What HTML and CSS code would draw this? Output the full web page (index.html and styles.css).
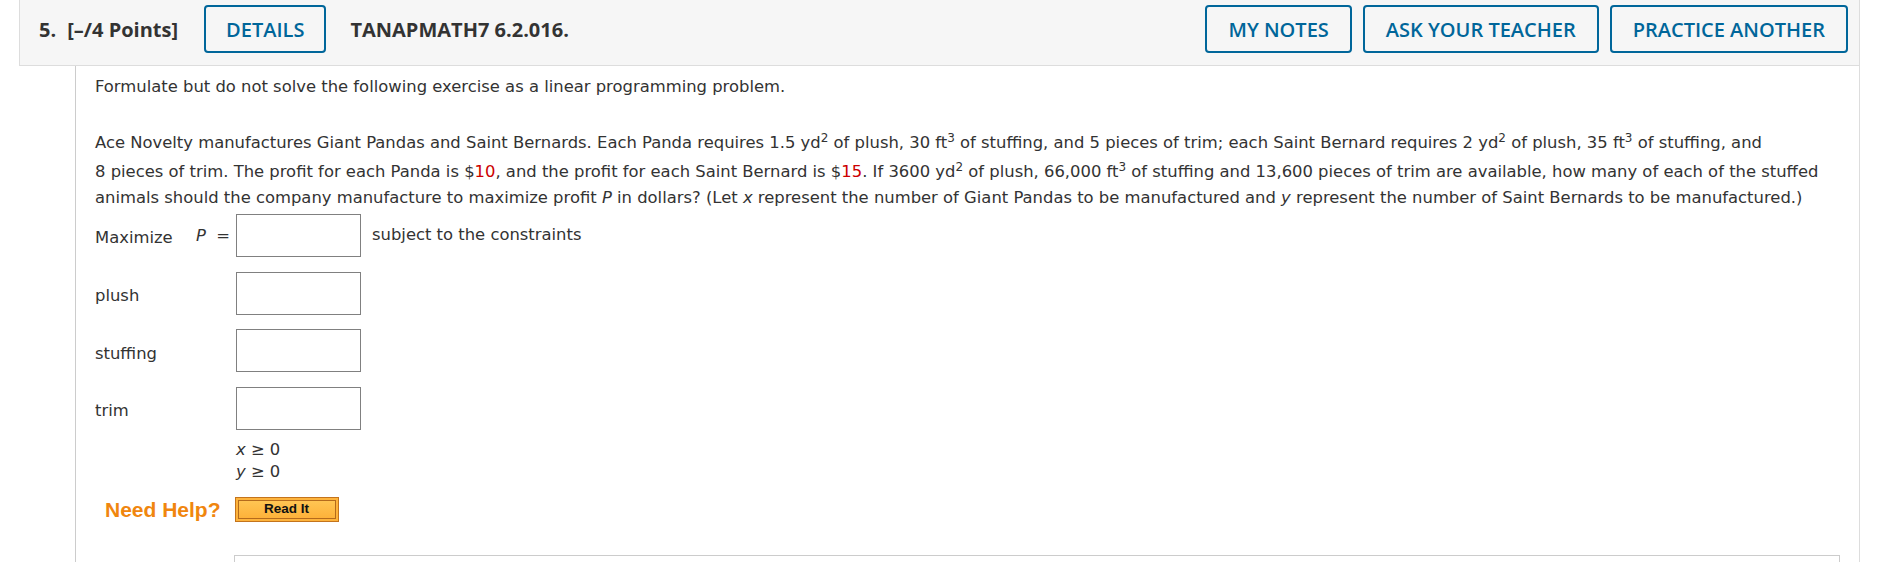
FILE: index.html
```html
<!DOCTYPE html>
<html>
<head>
<meta charset="utf-8">
<link rel="stylesheet" href="styles.css">
</head>
<body>
<div class="page">
  <div class="qhead">
    <span class="qnum">5.</span>
    <span class="qpts">[–/4 Points]</span>
    <button class="hbtn details">DETAILS</button>
    <span class="qcode">TANAPMATH7 6.2.016.</span>
    <div class="hright">
      <button class="hbtn">MY NOTES</button>
      <button class="hbtn">ASK YOUR TEACHER</button>
      <button class="hbtn">PRACTICE ANOTHER</button>
    </div>
  </div>
  <div class="qbody">
    <p class="intro">Formulate but do not solve the following exercise as a linear programming problem.</p>
    <p class="problem">Ace Novelty manufactures Giant Pandas and Saint Bernards. Each Panda requires 1.5 yd<sup class="sup">2</sup> of plush, 30 ft<sup class="sup">3</sup> of stuffing, and 5 pieces of trim; each Saint Bernard requires 2 yd<sup class="sup">2</sup> of plush, 35 ft<sup class="sup">3</sup> of stuffing, and<br>8 pieces of trim. The profit for each Panda is $<span class="red">10</span>, and the profit for each Saint Bernard is $<span class="red">15</span>. If 3600 yd<sup class="sup">2</sup> of plush, 66,000 ft<sup class="sup">3</sup> of stuffing and 13,600 pieces of trim are available, how many of each of the stuffed<br>animals should the company manufacture to maximize profit <i>P</i> in dollars? (Let <i>x</i> represent the number of Giant Pandas to be manufactured and <i>y</i> represent the number of Saint Bernards to be manufactured.)</p>
    <div class="lp">
      <span class="lbl">Maximize</span>
      <span class="peq"><i>P</i> &nbsp;=</span>
      <span class="box"></span>
      <span class="subj">subject to the constraints</span>

      <span class="lbl">plush</span>
      <span class="box c3"></span>

      <span class="lbl">stuffing</span>
      <span class="box c3"></span>

      <span class="lbl">trim</span>
      <span class="box c3"></span>
    </div>
    <div class="nonneg">
      <div><i>x</i> &ge; 0</div>
      <div><i>y</i> &ge; 0</div>
    </div>
    <div class="help">
      <span class="needhelp">Need Help?</span>
      <span class="readit"><span class="readit-in">Read It</span></span>
    </div>
    <div class="work"></div>
  </div>
</div>
</body>
</html>
```
FILE: styles.css
```css
html, body {
  margin: 0;
  padding: 0;
  background: #ffffff;
  height: 562px;
  overflow: hidden;
}
.page {
  margin-left: 19px;
  width: 1841px;
}
.qhead {
  display: flex;
  align-items: center;
  background: #f6f6f6;
  border: 1px solid #dddddd;
  border-top: none;
  padding: 5px 11px 12px 19px;
  font-family: "Open Sans", "Noto Sans", sans-serif;
  color: #333333;
}
.qnum, .qpts, .qcode {
  font-size: 20px;
  font-weight: 700;
}
.qpts {
  margin-left: 11px;
}
.qcode {
  margin-left: 24px;
}
.hbtn {
  height: 48px;
  padding: 0 21px;
  border: 2px solid #00669a;
  border-radius: 4px;
  background: #f6f6f6;
  color: #00669a;
  font-family: "Open Sans", "Noto Sans", sans-serif;
  font-size: 20px;
  font-weight: 600;
}
.details {
  margin-left: 26px;
  padding: 0 20px;
}
.hright {
  margin-left: auto;
  display: flex;
  gap: 11px;
}
.qbody {
  margin-left: 56px;
  border-left: 1px solid #cccccc;
  border-right: 1px solid #dddddd;
  height: 500px;
  padding: 8px 19px 0 19px;
  font-family: "DejaVu Sans", Verdana, sans-serif;
  font-size: 16.4px;
  line-height: 25px;
  color: #333333;
}
.intro {
  margin: 0;
}
.problem {
  margin: 27px 0 0 0;
  white-space: nowrap;
}
.sup {
  font-size: 12px;
  vertical-align: super;
}
.red {
  color: #cc0000;
}
.lp {
  margin-top: 4px;
  display: grid;
  grid-template-columns: 101px 40px 125px auto;
  grid-auto-rows: 43px;
  row-gap: 14.6px;
  align-items: center;
}
.lbl {
  grid-column: 1;
  padding-top: 5px;
}
.peq {
  grid-column: 2;
}
.box {
  grid-column: 3;
  height: 43px;
  box-sizing: border-box;
  border: 1px solid #808080;
  background: #ffffff;
}
.subj {
  grid-column: 4;
  padding-left: 11px;
  align-self: center;
  padding-bottom: 1px;
}
.nonneg {
  margin-top: 9px;
  margin-left: 141px;
  line-height: 22px;
}
.help {
  display: flex;
  align-items: center;
  margin-top: 14px;
  padding-left: 10px;
}
.needhelp {
  font-family: "Liberation Sans", Arial, sans-serif;
  font-weight: 700;
  font-size: 21px;
  color: #f0860e;
}
.readit {
  margin-left: 14px;
  width: 104px;
  height: 25px;
  box-sizing: border-box;
  border: 1px solid #c4741c;
  background: #fdb33c;
  padding: 2px;
  display: flex;
}
.readit-in {
  flex: 1;
  border: 1px solid #b46a1c;
  background: linear-gradient(#ffc553, #fdb23a);
  display: flex;
  align-items: center;
  justify-content: center;
  font-family: "Liberation Sans", Arial, sans-serif;
  font-weight: 700;
  font-size: 13.5px;
  color: #111111;
  line-height: 1;
}
.work {
  margin-top: 33px;
  margin-left: 139px;
  height: 60px;
  border: 1px solid #cccccc;
}
```
